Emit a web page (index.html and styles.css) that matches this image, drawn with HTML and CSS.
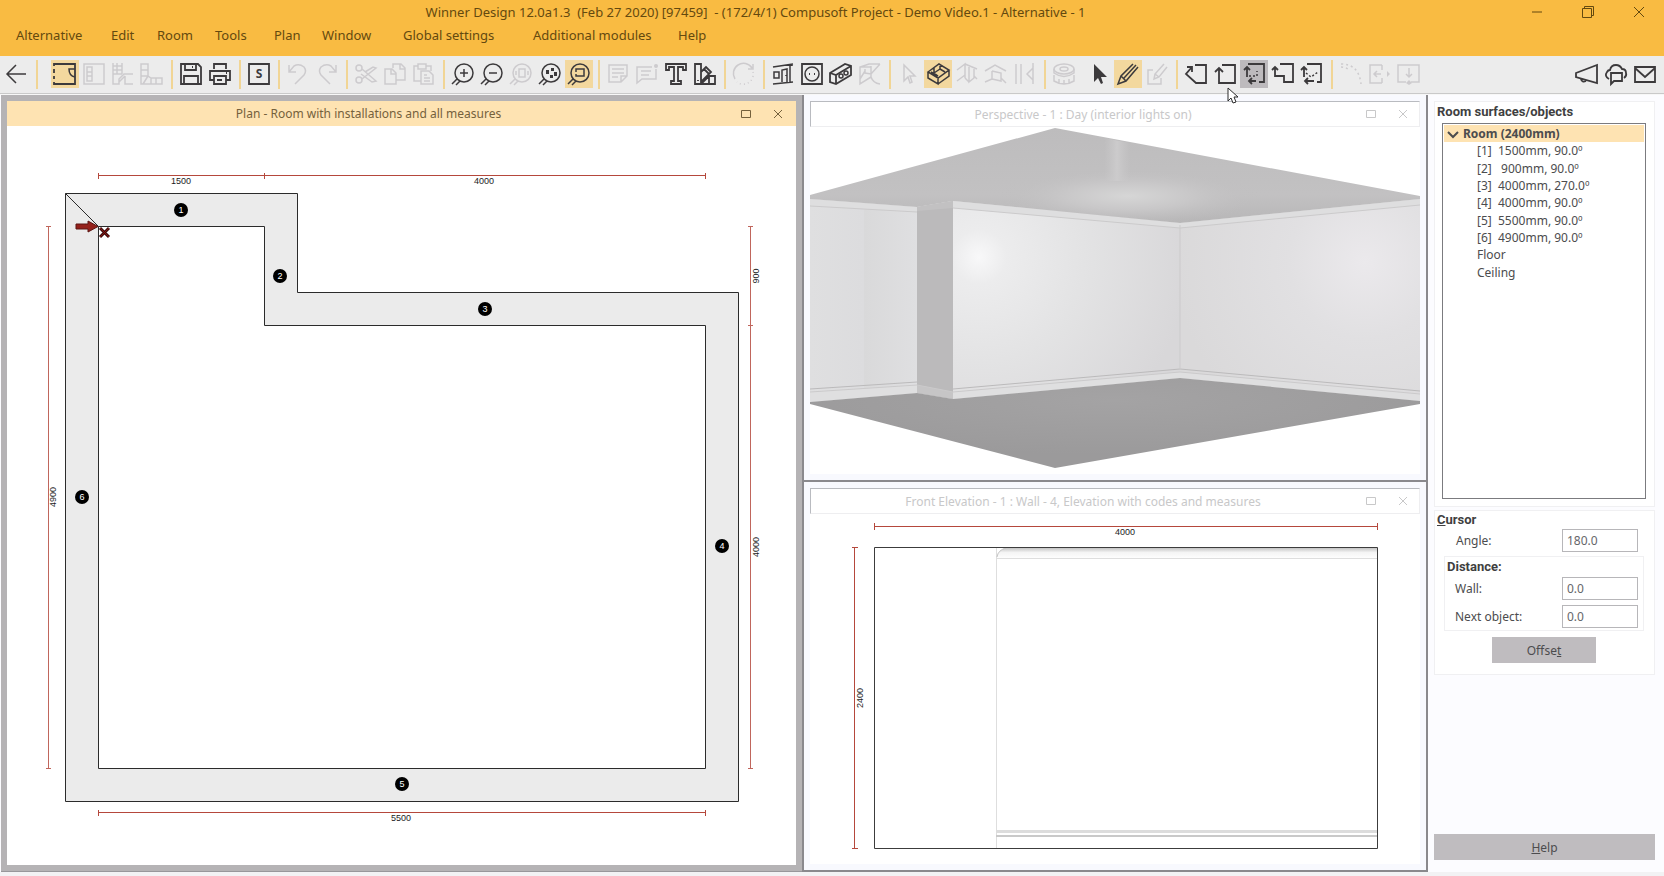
FILE: index.html
```html
<!DOCTYPE html>
<html lang="en">
<head>
    <meta charset="UTF-8">
    <meta name="viewport" content="width=device-width, initial-scale=1.0">
    <title>Winner Design</title>
    <link rel="stylesheet" href="styles.css">
</head>
<body>
    <svg class="defs" aria-hidden="true">
        <symbol id="magnifier" viewBox="0 0 28 28">
            <circle cx="15" cy="13" r="9"/>
            <path d="M8 19l-5 5M11 21l-4 4"/>
        </symbol>
    </svg>

    <div class="app">
        <header class="header">
            <div class="title-row">
                <h1 class="app-title">Winner Design 12.0a1.3  (Feb 27 2020) [97459]  - (172/4/1) Compusoft Project - Demo Video.1 - Alternative - 1</h1>
                <button class="window-button" aria-label="Minimize"><svg viewBox="0 0 14 14"><path d="M2 7h10"/></svg></button>
                <button class="window-button" aria-label="Restore"><svg viewBox="0 0 14 14"><path d="M1.5 3.5h9v9h-9zM3.5 3.5v-2h9v9h-2"/></svg></button>
                <button class="window-button" aria-label="Close"><svg viewBox="0 0 14 14"><path d="M2 2l10 10M12 2l-10 10"/></svg></button>
            </div>
            <nav class="menu">
                <a href="#">Alternative</a>
                <a href="#">Edit</a>
                <a href="#">Room</a>
                <a href="#">Tools</a>
                <a href="#">Plan</a>
                <a href="#">Window</a>
                <a href="#">Global settings</a>
                <a href="#">Additional modules</a>
                <a href="#">Help</a>
            </nav>
        </header>

        <div class="toolbar">
            <button class="tool" aria-label="Back"><svg viewBox="0 0 28 28"><path d="M13 5l-9 9 9 9M4 14h19"/></svg></button>
            <span class="separator first"></span>

            <button class="tool active" aria-label="Room plan"><svg viewBox="0 0 28 28"><path class="thick" d="M3 6V4h21v20H3v-2M3 9v4M3 16v3"/><path d="M24 9h-6q0 7 6 8"/></svg></button>
            <button class="tool" disabled aria-label="Cabinet plan"><svg viewBox="0 0 28 28"><path d="M4 4h20v20H4zM7 7h5v14H7zM7 12h5M7 16h5"/></svg></button>
            <button class="tool" disabled aria-label="Worktop"><svg viewBox="0 0 28 28"><path d="M4 3v21h6v-5l5-5h9M13 3v11M4 6h9M4 10h9M8 3v11M4 14h9M10 22l6-6M16 16v8h8"/></svg></button>
            <button class="tool" disabled aria-label="Plinth"><svg viewBox="0 0 28 28"><path d="M3 4h7v12l3 2h11v6H3zM3 10h7M3 16h7M10 16l-5 8M13 18v6M18 18v6"/></svg></button>
            <span class="separator"></span>

            <button class="tool" aria-label="Save"><svg viewBox="0 0 28 28"><path class="thick" d="M4 4h17l3 3v17H4zM8 4v6h11V4M7 24v-8h14v8M15 7h1"/></svg></button>
            <button class="tool" aria-label="Print"><svg viewBox="0 0 28 28"><path class="thick" d="M8 9V4h12v5M8 20H4v-9h20v9h-4M8 16h12v8H8zM11 20h5M20 13h1"/></svg></button>
            <span class="separator"></span>

            <button class="tool" aria-label="Summary"><svg viewBox="0 0 28 28"><path class="thick" d="M4 4h20v20H4z"/><text x="14" y="18" text-anchor="middle">S</text></svg></button>
            <span class="separator"></span>

            <button class="tool" disabled aria-label="Undo"><svg viewBox="0 0 28 28"><path d="M5 5v7h7M5 12l5-6q5-3 10 1 3 4 0 8l-9 9"/></svg></button>
            <button class="tool" disabled aria-label="Redo"><svg viewBox="0 0 28 28"><path d="M23 5v7h-7M23 12l-5-6q-5-3-10 1-3 4 0 8l9 9"/></svg></button>
            <span class="separator"></span>

            <button class="tool" disabled aria-label="Cut"><svg viewBox="0 0 28 28"><circle cx="7" cy="8" r="3"/><circle cx="7" cy="20" r="3"/><path d="M10 9l14 12-4 1-11-8M10 19l14-11-3-1-8 5"/></svg></button>
            <button class="tool" disabled aria-label="Copy"><svg viewBox="0 0 28 28"><path d="M12 8V4h8l4 4v12h-9M19 4v5h5M4 9h7l4 4v11H4zM10 9v5h5"/></svg></button>
            <button class="tool" disabled aria-label="Paste"><svg viewBox="0 0 28 28"><path d="M11 21H4V6h4V4h8v2h5v5M8 6v3h8V6M11 11h8l4 4v9H11zM14 15h3M14 18h6M14 21h6"/></svg></button>
            <span class="separator"></span>

            <button class="tool" aria-label="Zoom in"><svg viewBox="0 0 28 28"><use href="#magnifier"/><path d="M15 9v8M11 13h8"/></svg></button>
            <button class="tool" aria-label="Zoom out"><svg viewBox="0 0 28 28"><use href="#magnifier"/><path d="M11 13h8"/></svg></button>
            <button class="tool" disabled aria-label="Zoom previous"><svg viewBox="0 0 28 28"><use href="#magnifier"/><path d="M12 9h6v8h-6zM9 11v4M21 11v4"/></svg></button>
            <button class="tool" aria-label="Zoom objects"><svg viewBox="0 0 28 28"><use href="#magnifier"/><path class="solid" d="M10 10h3v4h-3zM15 8h3v3h-3zM18 12h3v4h-3zM14 15h3v3h-3z"/></svg></button>
            <button class="tool active" aria-label="Zoom room"><svg viewBox="0 0 28 28"><use href="#magnifier"/><path d="M11 12V9h8v7h-8v-2"/></svg></button>
            <span class="separator"></span>

            <button class="tool" disabled aria-label="Note"><svg viewBox="0 0 28 28"><path d="M5 5h18v11l-6 6H5zM23 16h-6v6M8 9h12M8 13h12M8 17h6"/></svg></button>
            <button class="tool" disabled aria-label="Comment"><svg viewBox="0 0 28 28"><path d="M19 7H4v16l5-4h14V9M8 11h10M8 15h8"/><circle class="solid" cx="23" cy="6" r="2"/></svg></button>
            <button class="tool" aria-label="Text"><svg viewBox="0 0 28 28"><path class="thick" d="M4 4h20v6h-3V7h-5v14h3v3H9v-3h3V7H7v3H4z"/></svg></button>
            <button class="tool" aria-label="Materials"><svg viewBox="0 0 28 28"><path class="thick" d="M4 4h6v20H4zM10 12l5-5 5 5-10 10M13 9l5 5M17 16h7v8H10l8-8M18 17v7M7 20v1"/></svg></button>
            <span class="separator"></span>

            <button class="tool" disabled aria-label="Rotate"><svg viewBox="0 0 28 28"><path d="M5 19A10 10 0 0 1 22 8M23 4v5h-5"/><path stroke-dasharray="1 3" d="M23 12a10 10 0 0 1-16 10"/></svg></button>
            <span class="separator"></span>

            <button class="tool" aria-label="Installations"><svg viewBox="0 0 28 28"><path d="M4 7l20-3M21 4v19M4 24l20-2M5 12h5v6H5zM13 22V10l5-1v13M17 15v1M23 4v2"/></svg></button>
            <button class="tool" aria-label="Socket"><svg viewBox="0 0 28 28"><path class="thick" d="M4 4h20v20H4z"/><circle cx="14" cy="14" r="7"/><path class="thick" d="M11 14h1M16 14h1"/></svg></button>
            <button class="tool" aria-label="Beam"><svg viewBox="0 0 28 28"><path class="thick" d="M3 13l15-9 6 2v9L9 24l-6-2zM3 13l6 2 15-9M9 15v9"/><circle cx="14" cy="16" r="2"/><circle cx="19" cy="13" r="2"/></svg></button>
            <button class="tool" disabled aria-label="Room shape"><svg viewBox="0 0 28 28"><path d="M24 4H13L4 7v17l11-7V6M15 17q2 6 9 7M4 7h11M9 11l-5 8M24 4l-9 10-6-1v-4"/></svg></button>
            <span class="separator"></span>

            <button class="tool" disabled aria-label="Select"><svg viewBox="0 0 28 28"><path d="M9 5v16l4-4 2 6 2-1-2-6h5z"/></svg></button>
            <button class="tool active" aria-label="Room view"><svg viewBox="0 0 28 28"><path d="M4 12l11-8 10 6-11 8zM4 12v6l10 6V18M14 24l11-8v-6M7 12l7 4M10 8v5l4 3M16 4v5l5 3M10 13l6-4"/></svg></button>
            <button class="tool" disabled aria-label="Open wall"><svg viewBox="0 0 28 28"><path d="M4 10l8-6v14M4 21l8-6M12 4l12 5M16 7v15l5-4V9M16 22l-4-4M21 16l3 3"/></svg></button>
            <button class="tool" disabled aria-label="Roof"><svg viewBox="0 0 28 28"><path d="M3 11l10-6 11 6M3 22l7-3V11M10 11l9 2v8l-9-2M19 18l5 5"/></svg></button>
            <button class="tool" disabled aria-label="Align"><svg viewBox="0 0 28 28"><path d="M5 4v20M10 4v20M22 3v21M16 14l6-6v12z"/></svg></button>
            <span class="separator"></span>

            <button class="tool" disabled aria-label="Measure"><svg viewBox="0 0 28 28"><ellipse cx="14" cy="9" rx="10" ry="5"/><ellipse cx="14" cy="9" rx="4" ry="2"/><path d="M4 9v4q10 7 20 0V9M4 15v6q10 6 20 0v-6M9 19v4M14 20v4M19 19v4"/></svg></button>
            <button class="tool pointer" aria-label="Pointer"><svg viewBox="0 0 28 28"><path class="solid" d="M9 4v18l4-4 3 6 2-1-2-6h6z"/></svg></button>
            <button class="tool active" aria-label="Draw walls"><svg viewBox="0 0 28 28"><path d="M19 4L7 16 4 24l8-3L24 7M7 16l5 5M22 5L10 18"/></svg></button>
            <button class="tool" disabled aria-label="Edit walls"><svg viewBox="0 0 28 28"><path d="M10 10H5v14h13v-6M21 4l-9 10-1 5 5-2 8-10M12 14l4 3"/></svg></button>
            <span class="separator"></span>

            <button class="tool" aria-label="Angled wall"><svg viewBox="0 0 28 28"><path class="thick" d="M13 5h11v18H14l-10-9 6-7M5 7h5v5"/></svg></button>
            <button class="tool" aria-label="Straight wall"><svg viewBox="0 0 28 28"><path class="thick" d="M11 5h13v18H8V9M4 12l4-4 4 4"/></svg></button>
            <button class="tool pressed" aria-label="Rectangular room"><svg viewBox="0 0 28 28"><path class="thick" d="M8 4h16v18h-5M7 17V7M4 10l3-3 3 3M12 18l-3 3 3 3M16 21H9"/><path stroke-dasharray="2 2" d="M9 16h8v-5"/></svg></button>
            <button class="tool" aria-label="L-shaped room"><svg viewBox="0 0 28 28"><path class="thick" d="M11 4h13v18h-9v-6H6V7M3 10l3-3 3 3"/></svg></button>
            <button class="tool" aria-label="Closed room"><svg viewBox="0 0 28 28"><path class="thick" d="M9 4h14v18h-4M6 17V7M3 10l3-3 3 3M10 18l-3 3 3 3M7 21h9"/><path stroke-dasharray="2 2" d="M8 13l5 4 7-5"/></svg></button>
            <span class="separator"></span>

            <button class="tool" disabled aria-label="Curve"><svg viewBox="0 0 28 28"><path stroke-dasharray="2 3" d="M4 4q18 0 20 20"/><path stroke-dasharray="2 3" d="M4 7q5 0 8 3"/></svg></button>
            <button class="tool" disabled aria-label="Move wall"><svg viewBox="0 0 28 28"><path d="M16 5H4v18h12M16 5v5M16 18v5M9 14h6M11 11l-3 3 3 3"/><path class="solid" d="M21 11l3 3-3 3z"/></svg></button>
            <button class="tool" disabled aria-label="Move floor"><svg viewBox="0 0 28 28"><path d="M11 22H3V5h21v17h-8M14 8v9M11 14l3 3 3-3"/><path class="solid" d="M14 20l3 3-3 2-3-2z"/></svg></button>

            <div class="toolbar-right">
                <button class="tool" aria-label="News"><svg viewBox="0 0 28 28"><path class="thick" d="M3 13l21-8v18L3 17zM8 19q1 4 5 2"/></svg></button>
                <button class="tool" aria-label="Cloud"><svg viewBox="0 0 28 28"><path class="thick" d="M7 19q-5-3-2-7 1-2 3-2 1-5 6-5 4 0 6 4 4 0 4 4 1 3-2 5M9 13h11v8h-8l-3 3z"/></svg></button>
                <button class="tool" aria-label="Mail"><svg viewBox="0 0 28 28"><path class="thick" d="M4 7h20v15H4zM4 8l10 9 10-9"/></svg></button>
            </div>
        </div>

        <main class="workspace">
            <section class="pane plan-pane">
                <div class="pane-title">
                    <h2>Plan - Room with installations and all measures</h2>
                    <button class="pane-button" aria-label="Maximize"><svg viewBox="0 0 12 12"><path d="M1.5 2.5h9v7h-9z"/></svg></button>
                    <button class="pane-button" aria-label="Close"><svg viewBox="0 0 12 12"><path d="M2 2l8 8M10 2l-8 8"/></svg></button>
                </div>
                <svg class="drawing" viewBox="7 126 789 739">
                    <!-- walls -->
                    <path class="wall" fill-rule="evenodd" d="M65.5 193.5H297.5V292.5H738.5V801.5H65.5ZM98.5 226.5V768.5H705.5V325.5H264.5V226.5Z"/>
                    <path class="wall" d="M65.5 193.5l33 33"/>
                    <!-- measures -->
                    <path class="measure" d="M98.5 175.5H705.5M98.5 173v6M264.5 173v6M705.5 173v6"/>
                    <path class="measure" d="M98.5 812.5H705.5M98.5 810v6M705.5 810v6"/>
                    <path class="measure soft" d="M48.5 226.5V768.5M46 226.5h5M46 768.5h5"/>
                    <path class="measure soft" d="M750.5 226.5V768.5M748 226.5h5M748 325.5h5M748 768.5h5"/>
                    <g class="measure-text">
                        <text x="181" y="184">1500</text>
                        <text x="484" y="184">4000</text>
                        <text x="401" y="821">5500</text>
                        <text transform="translate(56 497) rotate(-90)">4900</text>
                        <text transform="translate(759 276) rotate(-90)">900</text>
                        <text transform="translate(759 547) rotate(-90)">4000</text>
                    </g>
                    <g class="wall-dots">
                        <circle cx="181" cy="210" r="7"/>
                        <circle cx="280" cy="276" r="7"/>
                        <circle cx="485" cy="309" r="7"/>
                        <circle cx="722" cy="546" r="7"/>
                        <circle cx="402" cy="784" r="7"/>
                        <circle cx="82" cy="497" r="7"/>
                    </g>
                    <g class="wall-numbers">
                        <text x="181" y="213">1</text>
                        <text x="280" y="279">2</text>
                        <text x="485" y="312">3</text>
                        <text x="722" y="549">4</text>
                        <text x="402" y="787">5</text>
                        <text x="82" y="500">6</text>
                    </g>
                    <!-- start point -->
                    <path class="start-arrow" d="M76 224h12v-3l10 5.5-10 5.5v-3H76z"/>
                    <path class="start-cross-edge" d="M100 228l9 9M109 228l-9 9"/>
                    <path class="start-cross" d="M100 228l9 9M109 228l-9 9"/>
                </svg>
            </section>

            <div class="side-panes">
                <section class="pane view-pane top">
                    <div class="pane-title">
                        <h2>Perspective - 1 : Day (interior lights on)</h2>
                        <button class="pane-button" aria-label="Maximize"><svg viewBox="0 0 12 12"><path d="M1.5 2.5h9v7h-9z"/></svg></button>
                        <button class="pane-button" aria-label="Close"><svg viewBox="0 0 12 12"><path d="M2 2l8 8M10 2l-8 8"/></svg></button>
                    </div>
                    <svg class="drawing" viewBox="0 0 610 347">
                        <defs>
                            <radialGradient id="ceilingLight" gradientUnits="userSpaceOnUse" cx="0" cy="0" r="1" gradientTransform="translate(318 69) scale(130 28)">
                                <stop offset="0" stop-color="#d6d6d6"/>
                                <stop offset="0.5" stop-color="#c8c7c8"/>
                                <stop offset="1" stop-color="#bfbebf" stop-opacity="0"/>
                            </radialGradient>
                            <linearGradient id="ceilingBase" x1="0" y1="0" x2="0" y2="1">
                                <stop offset="0" stop-color="#bdbcbd"/>
                                <stop offset="0.7" stop-color="#c2c1c2"/>
                                <stop offset="1" stop-color="#b7b6b7"/>
                            </linearGradient>
                            <linearGradient id="beam" x1="0" y1="0" x2="1" y2="0">
                                <stop offset="0" stop-color="#c8c7c8" stop-opacity="0"/>
                                <stop offset="0.5" stop-color="#cccbcc"/>
                                <stop offset="1" stop-color="#c8c7c8" stop-opacity="0"/>
                            </linearGradient>
                            <radialGradient id="backWall" gradientUnits="userSpaceOnUse" cx="169" cy="130" r="210">
                                <stop offset="0" stop-color="#f8f8f9"/>
                                <stop offset="0.13" stop-color="#ececed"/>
                                <stop offset="0.5" stop-color="#e3e3e4"/>
                                <stop offset="1" stop-color="#d8d7d9"/>
                            </radialGradient>
                            <radialGradient id="rightWall" gradientUnits="userSpaceOnUse" cx="555" cy="135" r="190">
                                <stop offset="0" stop-color="#ebe9ec"/>
                                <stop offset="0.4" stop-color="#e1e0e2"/>
                                <stop offset="1" stop-color="#dad9da"/>
                            </radialGradient>
                            <linearGradient id="leftWall" x1="0" y1="0" x2="1" y2="0">
                                <stop offset="0" stop-color="#dfdfe0"/>
                                <stop offset="0.5" stop-color="#dcdcde"/>
                                <stop offset="0.51" stop-color="#d9d9da"/>
                                <stop offset="1" stop-color="#dfdfe1"/>
                            </linearGradient>
                            <radialGradient id="floor" cx="0.5" cy="0.25" r="0.6">
                                <stop offset="0" stop-color="#a4a3a4"/>
                                <stop offset="1" stop-color="#9b9a9b"/>
                            </radialGradient>
                        </defs>
                        <path fill="url(#leftWall)" d="M0 72L107 80V266L0 275z"/>
                        <path fill="#bbbabb" d="M107 80L143 74V272L107 266z"/>
                        <path fill="url(#backWall)" d="M143 74L370 96V251L143 272z"/>
                        <path fill="url(#rightWall)" d="M370 96L610 72V274L370 251z"/>
                        <!-- cornice and skirting -->
                        <path fill="#dededf" d="M0 72L107 80V85L0 79zM143 74L370 96V101L143 81zM370 96L610 72V78L370 101z"/>
                        <path fill="#c2c1c2" d="M107 80L143 74V81L107 84z"/>
                        <path class="moulding" d="M0 79L107 85M143 81L370 101L610 78"/>
                        <path fill="#dfdfe0" d="M0 265L107 258V266L0 275zM143 265L370 245V251L143 272zM370 245L610 267V274L370 251z"/>
                        <path fill="#c6c5c6" d="M107 258L143 265V272L107 266z"/>
                        <path class="moulding dark" d="M0 262L107 255L143 262L370 242L610 264"/>
                        <path class="moulding" d="M0 265L107 258L143 265L370 245L610 267M370 98V242"/>
                        <path fill="url(#ceilingBase)" d="M245 1L610 69V72L370 96L143 74L107 80L0 72V68z"/>
                        <path fill="url(#ceilingLight)" d="M245 1L610 69V72L370 96L143 74L107 80L0 72V68z"/>
                        <path fill="url(#beam)" d="M294 11L320 16V54H294z"/>
                        <path fill="url(#floor)" d="M0 275L107 266L143 272L370 251L610 274V277L245 341L0 277z"/>
                    </svg>
                </section>

                <section class="pane view-pane">
                    <div class="pane-title">
                        <h2>Front Elevation - 1 : Wall - 4, Elevation with codes and measures</h2>
                        <button class="pane-button" aria-label="Maximize"><svg viewBox="0 0 12 12"><path d="M1.5 2.5h9v7h-9z"/></svg></button>
                        <button class="pane-button" aria-label="Close"><svg viewBox="0 0 12 12"><path d="M2 2l8 8M10 2l-8 8"/></svg></button>
                    </div>
                    <svg class="drawing" viewBox="0 -1 610 350">
                        <defs>
                            <linearGradient id="cornice" x1="0" y1="0" x2="0" y2="1">
                                <stop offset="0" stop-color="#c4c4c4"/>
                                <stop offset="0.4" stop-color="#f4f4f4"/>
                                <stop offset="1" stop-color="#ffffff"/>
                            </linearGradient>
                        </defs>
                        <path fill="url(#cornice)" d="M187 44v-5l7-6H567v11z"/>
                        <path class="profile" d="M186.5 33V333M187 43.5H567"/>
                        <path class="profile dark" d="M187 42q1-7 9-9"/>
                        <path fill="#dcdcdc" d="M186 315h381v3H186z"/>
                        <path fill="#c9c9c9" d="M186 320h381v2H186z"/>
                        <path class="outline" d="M64.5 32.5H567.5V333.5H64.5z"/>
                        <path class="measure" d="M64.5 11.5H567.5M64.5 8v7M567.5 8v7"/>
                        <path class="measure" d="M44.5 32.5V333.5M42 32.5h6M42 333.5h6"/>
                        <g class="measure-text">
                            <text x="315" y="20">4000</text>
                            <text transform="translate(53 183) rotate(-90)">2400</text>
                        </g>
                    </svg>
                </section>
            </div>

            <aside class="sidebar">
                <section class="group surfaces">
                    <h3>Room surfaces/objects</h3>
                    <div class="surface-box">
                        <ul class="surface-list">
                            <li class="room"><svg viewBox="0 0 12 12"><path d="M1 4l5 5 5-5"/></svg>Room (2400mm)</li>
                            <li>[1]  1500mm, 90.0º</li>
                            <li>[2]   900mm, 90.0º</li>
                            <li>[3]  4000mm, 270.0º</li>
                            <li>[4]  4000mm, 90.0º</li>
                            <li>[5]  5500mm, 90.0º</li>
                            <li>[6]  4900mm, 90.0º</li>
                            <li>Floor</li>
                            <li>Ceiling</li>
                        </ul>
                    </div>
                </section>

                <section class="group cursor-group">
                    <h3><u>C</u>ursor</h3>
                    <div class="field">
                        <label for="angle">Angle:</label>
                        <input type="text" id="angle" value="180.0">
                    </div>
                    <div class="distance">
                        <h3>Distance:</h3>
                        <div class="field">
                            <label for="wall">Wall:</label>
                            <input type="text" id="wall" value="0.0">
                        </div>
                        <div class="field">
                            <label for="nextObject">Next object:</label>
                            <input type="text" id="nextObject" value="0.0">
                        </div>
                    </div>
                    <button class="button offset-button">Offse<u>t</u></button>
                </section>

                <button class="button help-button"><u>H</u>elp</button>
            </aside>
        </main>
        <footer class="status"></footer>

        <svg class="mouse" viewBox="0 0 12 18" aria-hidden="true"><path d="M1 1v13l3-3 2 5 3-1-2-5h4z"/></svg>
    </div>
</body>
</html>
```
FILE: styles.css
```css
* {
    box-sizing: border-box;
}
body {
    margin: 0;
    font-family: 'Noto Sans', 'Open Sans', sans-serif;
    font-size: 12px;
    color: #4c4c4e;
}
h1, h2, h3 {
    margin: 0;
    font-size: 12px;
    font-weight: normal;
}
button {
    margin: 0;
    padding: 0;
    border: none;
    background: none;
    font: inherit;
    color: inherit;
}
svg {
    display: block;
    fill: none;
    stroke: currentColor;
}
.defs {
    position: absolute;
    width: 0;
    height: 0;
}
.app {
    position: relative;
    display: flex;
    flex-direction: column;
    height: 100vh;
    min-height: 700px;
    background-color: #fcfcff;
}

/* header */
.header {
    height: 56px;
    background-color: #f9bb42;
    color: #64490f;
    font-size: 13px;
}
.title-row {
    display: flex;
    align-items: center;
    height: 24px;
}
.app-title {
    flex: 1;
    font-size: 13px;
    text-align: center;
    white-space: pre;
}
.window-button {
    display: flex;
    justify-content: center;
    width: 51px;
}
.window-button svg {
    width: 14px;
    height: 14px;
}
.menu {
    display: grid;
    grid-template-columns: 95px 46px 58px 59px 48px 81px 130px 145px auto;
    padding-left: 16px;
    line-height: 22px;
}
.menu a {
    color: inherit;
    text-decoration: none;
    white-space: nowrap;
}

/* toolbar */
.toolbar {
    display: flex;
    align-items: flex-start;
    height: 39px;
    padding: 4px 4px 0 3px;
    background-color: #ececec;
    box-shadow: inset 0 -1px #f7f7f7, inset 0 -2px #c9c9c9;
}
.tool {
    width: 28px;
    height: 28px;
    margin-right: 1px;
    flex: none;
    color: #3c3a3c;
}
.tool svg {
    width: 28px;
    height: 28px;
    stroke-width: 1.5;
}
.tool .thick {
    stroke-width: 1.8;
}
.tool .solid {
    fill: currentColor;
    stroke: none;
}
.tool text {
    fill: currentColor;
    stroke: none;
    font-size: 12px;
    font-weight: bold;
}
.tool:disabled {
    color: #cdcbce;
}
.tool.active {
    background-color: #f3d89e;
}
.tool.pressed {
    background-color: #bdbabd;
}
.tool.pointer {
    margin-left: 6px;
}
.separator {
    flex: none;
    width: 2px;
    height: 29px;
    margin: 0 4px;
    background-color: #f1d595;
}
.separator.first {
    margin-right: 13px;
}
.toolbar-right {
    display: flex;
    margin-left: auto;
}

/* workspace */
.workspace {
    flex: 1;
    min-height: 0;
    display: grid;
    grid-template-columns: 801fr 626fr 236px;
    padding-left: 1px;
}
.side-panes {
    display: grid;
    grid-template-rows: 385fr 392fr;
    min-height: 0;
}
.pane {
    display: flex;
    flex-direction: column;
    min-width: 0;
    min-height: 0;
}
.plan-pane {
    margin-bottom: 1px;
    border: 6px solid #b5b3b5;
    background-color: white;
    box-shadow: 0 1px #98979b;
}
.view-pane {
    padding: 6px;
    border: 2px solid #8a898d;
    background-color: #f8f9fe;
}
.view-pane.top {
    border-top: none;
    border-bottom: none;
}
.pane-title {
    flex: none;
    display: flex;
    align-items: center;
    height: 25px;
    padding-right: 2px;
    background-color: #fee3b2;
    color: #75613c;
}
.view-pane .pane-title {
    height: 26px;
    padding-right: 0;
    border: 1px solid #eeeef0;
    border-top-color: #b9bbc0;
    border-left-color: #b9bbc0;
    background-color: white;
    color: #c8c8c9;
}
.pane-title h2 {
    flex: 1;
    text-align: center;
    white-space: nowrap;
}
.pane-button {
    display: flex;
    justify-content: center;
    width: 32px;
}
.pane-button svg {
    width: 12px;
    height: 12px;
}
.drawing {
    flex: 1;
    width: 100%;
    min-height: 0;
    background-color: white;
    stroke: none;
}

/* drawings */
.wall {
    fill: #ebebeb;
    stroke: #2b2b2b;
}
.outline {
    stroke: #3c3c3c;
}
.measure {
    stroke: #b5483c;
}
.measure.soft {
    stroke: #c0665c;
}
.measure-text, .wall-numbers {
    font-family: 'Liberation Sans', sans-serif;
    font-size: 9px;
    text-anchor: middle;
    fill: #1c1c1c;
}
.wall-dots {
    fill: black;
}
.wall-numbers {
    fill: white;
}
.start-arrow {
    fill: #94201a;
    stroke: #5a1512;
}
.start-cross-edge {
    stroke: #3c0c0c;
    stroke-width: 3;
}
.start-cross {
    stroke: #8c1410;
    stroke-width: 1;
}
.moulding {
    stroke: #cbcacb;
}
.moulding.dark {
    stroke: #bbbabb;
}
.profile {
    stroke: #dedede;
}
.profile.dark {
    stroke: #c4c4c4;
}

/* sidebar */
.sidebar {
    display: flex;
    flex-direction: column;
    padding: 6px 9px 12px 6px;
    background-color: #fcfcff;
}
.group {
    border: 1px solid #f0f0f2;
    background-color: white;
}
.group h3 {
    font-family: Roboto, 'Noto Sans', sans-serif;
    font-size: 13px;
    font-weight: bold;
    line-height: 20px;
    color: #3f3f41;
}
.surfaces {
    flex: 0 1 406px;
    display: flex;
    flex-direction: column;
    min-height: 200px;
    padding: 0 8px 7px 7px;
}
.surfaces h3 {
    margin-left: -5px;
}
.surface-box {
    flex: 1;
    margin-top: 1px;
    padding: 1px;
    border: 1px solid #7b7b7f;
}
.surface-list {
    display: grid;
    grid-auto-rows: 1fr;
    height: 156px;
    margin: 0;
    padding: 0;
    list-style: none;
    line-height: 17px;
    white-space: pre;
}
.surface-list li {
    padding-left: 33px;
}
.surface-list .room {
    display: flex;
    align-items: center;
    gap: 4px;
    padding-left: 3px;
    background-color: #fee3b2;
    font-weight: bold;
}
.surface-list svg {
    width: 12px;
    height: 12px;
    stroke-width: 2;
}
.cursor-group {
    margin-top: 3px;
    padding: 0 10px 11px 9px;
}
.cursor-group > h3 {
    margin-left: -7px;
    line-height: 18px;
}
.field {
    display: flex;
    align-items: center;
    justify-content: space-between;
    padding: 0 6px 0 12px;
}
.field input {
    width: 76px;
    height: 23px;
    padding: 0 4px;
    border: 1px solid #b7b6b9;
    border-radius: 0;
    background-color: white;
    font: inherit;
    color: #66666a;
}
.distance {
    margin-top: 4px;
    border: 1px solid #f0f0f2;
    padding-bottom: 2px;
}
.distance h3 {
    margin-left: 2px;
}
.distance .field {
    padding: 0 5px 0 10px;
}
.distance .field + .field {
    margin-top: 5px;
}
.button {
    height: 26px;
    background-color: #bfbcbf;
}
.offset-button {
    display: block;
    width: 104px;
    margin: 6px auto 0;
}
.help-button {
    margin-top: auto;
}
.status {
    height: 4px;
    background-color: #f2f2f4;
}

/* mouse pointer floats over the toolbar edge */
.mouse {
    position: absolute;
    left: 1227px;
    top: 87px;
    width: 12px;
    height: 18px;
    fill: white;
    stroke: #2b2b2b;
}
```
